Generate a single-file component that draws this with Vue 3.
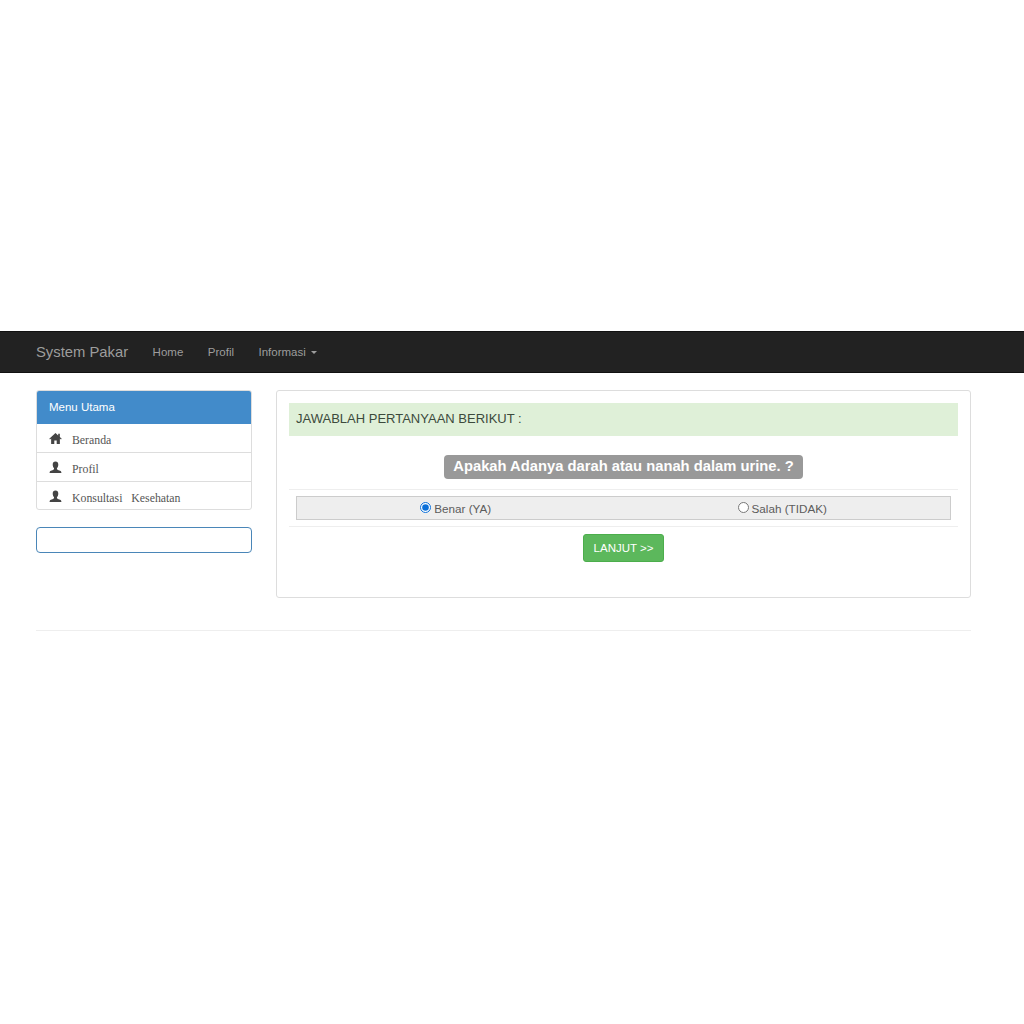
<script setup>
const menu = [
  { icon: 'home', label: 'Beranda' },
  { icon: 'user', label: 'Profil' },
  { icon: 'user', label: 'Konsultasi \u00a0 Kesehatan' }
]
</script>

<template>
  <div class="page">
    <nav class="navbar">
      <a class="brand">System Pakar</a>
      <a class="nav-link">Home</a>
      <a class="nav-link">Profil</a>
      <a class="nav-link">Informasi <span class="caret"></span></a>
    </nav>

    <div class="container">
      <div class="content">
        <aside class="sidebar">
          <div class="panel">
            <div class="panel-heading">Menu Utama</div>
            <div v-for="item in menu" :key="item.label" class="menu-item">
              <svg class="icon" viewBox="0 0 14 14">
                <path v-if="item.icon === 'home'" d="M7 1 L0.3 7.2 L1.1 8.1 L2.3 7.1 V13 H5.7 V9.2 H8.3 V13 H11.7 V7.1 L12.9 8.1 L13.7 7.2 L11.7 5.3 V1.8 H9.9 V3.7 Z" />
                <path v-else d="M7 0.6 C5 0.6 4 1.9 4 3.8 C4 5.6 4.6 7 5.4 7.8 C5.6 8.6 5.3 9.2 4.4 9.6 L2.1 10.5 C1.1 10.9 0.7 11.6 0.6 13 H13.4 C13.3 11.6 12.9 10.9 11.9 10.5 L9.6 9.6 C8.7 9.2 8.4 8.6 8.6 7.8 C9.4 7 10 5.6 10 3.8 C10 1.9 9 0.6 7 0.6 Z" />
              </svg>
              <span class="menu-label">{{ item.label }}</span>
            </div>
          </div>
          <div class="side-box"></div>
        </aside>

        <main class="main-panel">
          <div class="alert">JAWABLAH PERTANYAAN BERIKUT :</div>
          <div class="question">
            <span class="label">Apakah Adanya darah atau nanah dalam urine. ?</span>
          </div>
          <div class="answer-wrap">
            <div class="answers">
              <label class="answer">
                <input type="radio" name="jawab" checked />
                <span>Benar (YA)</span>
              </label>
              <label class="answer">
                <input type="radio" name="jawab" />
                <span>Salah (TIDAK)</span>
              </label>
            </div>
          </div>
          <div class="action">
            <button class="btn-success">LANJUT &gt;&gt;</button>
          </div>
        </main>
      </div>
      <hr class="divider" />
    </div>
  </div>
</template>

<style>
html, body {
  background: #fff;
}
</style>

<style scoped>
.page {
  padding-top: 331px;
  font-family: "Liberation Sans", Arial, sans-serif;
  font-size: 12px;
  color: #555;
}

/* NAVBAR */
.navbar {
  height: 42px;
  box-sizing: border-box;
  padding: 0 36px;
  background: #222;
  border-top: 1px solid #111;
  border-bottom: 1px solid #111;
  display: flex;
  align-items: center;
  color: #9d9d9d;
}

.brand {
  font-size: 14.8px;
  margin-right: 24.5px;
}

.nav-link {
  margin-right: 24.5px;
  font-size: 11.5px;
}

.caret {
  display: inline-block;
  width: 0;
  height: 0;
  margin-left: 2px;
  vertical-align: middle;
  border-top: 3px solid #9d9d9d;
  border-left: 3px solid transparent;
  border-right: 3px solid transparent;
}

/* LAYOUT */
.container {
  width: 935px;
  margin: 0 0 0 36px;
  padding-top: 17px;
}

.content {
  display: flex;
  gap: 24px;
}

/* SIDEBAR */
.sidebar {
  width: 216px;
  flex: none;
}

.panel {
  box-sizing: border-box;
  border: 1px solid #ddd;
  border-radius: 3px;
  overflow: hidden;
}

.panel-heading {
  height: 34px;
  margin: -1px -1px 0;
  padding-left: 13px;
  background: #428bca;
  color: #fff;
  font-size: 11.5px;
  line-height: 34px;
}

.menu-item {
  height: 29px;
  box-sizing: border-box;
  padding: 5px 0 0 12px;
  display: flex;
  align-items: center;
  border-bottom: 1px solid #ddd;
  font-family: "Liberation Serif", "Times New Roman", serif;
  font-size: 11.8px;
  color: #555;
}

.menu-item:last-child {
  height: 27px;
  border-bottom: none;
}

.icon {
  width: 13px;
  height: 13px;
  margin-right: 10px;
  margin-top: -4px;
  fill: #444;
  flex: none;
}

.side-box {
  height: 26px;
  box-sizing: border-box;
  margin-top: 17px;
  background: #fff;
  border: 1px solid #4a86b8;
  border-radius: 4px;
}

/* MAIN */
.main-panel {
  flex: 1;
  height: 208px;
  box-sizing: border-box;
  padding: 12px;
  background: #fff;
  border: 1px solid #ddd;
  border-radius: 3px;
}

.alert {
  height: 33px;
  box-sizing: border-box;
  padding-left: 7px;
  background: #dff0d8;
  color: #3c4a3c;
  font-size: 13px;
  line-height: 32px;
}

.question {
  height: 54px;
  display: flex;
  justify-content: center;
  align-items: center;
  box-sizing: border-box;
  padding-top: 9px;
  border-bottom: 1px solid #eee;
}

.label {
  padding: 0 9px;
  height: 24px;
  line-height: 23px;
  background: #999;
  color: #fff;
  font-size: 14.75px;
  font-weight: 700;
  border-radius: 4px;
}

.answer-wrap {
  padding: 6px 7px 6px;
  border-bottom: 1px solid #eee;
}

.answers {
  height: 24px;
  box-sizing: border-box;
  display: grid;
  grid-template-columns: 1fr 1fr;
  background: #eee;
  border: 1px solid #ccc;
}

.answer {
  display: flex;
  justify-content: center;
  align-items: center;
  gap: 3px;
  padding-right: 9px;
  font-size: 11.7px;
  color: #5c5c5c;
}

.answer input {
  width: 11px;
  height: 11px;
  margin: -2px 0 0;
  accent-color: #0a6fd8;
}

.action {
  display: flex;
  justify-content: center;
  padding-top: 7px;
}

.btn-success {
  width: 81px;
  height: 28px;
  padding: 0;
  background: #5cb85c;
  border: 1px solid #4cae4c;
  border-radius: 3px;
  color: #fff;
  font-family: inherit;
  font-size: 11.5px;
}

.divider {
  margin: 32px 0 0;
  border: none;
  border-top: 1px solid #eee;
}
</style>
